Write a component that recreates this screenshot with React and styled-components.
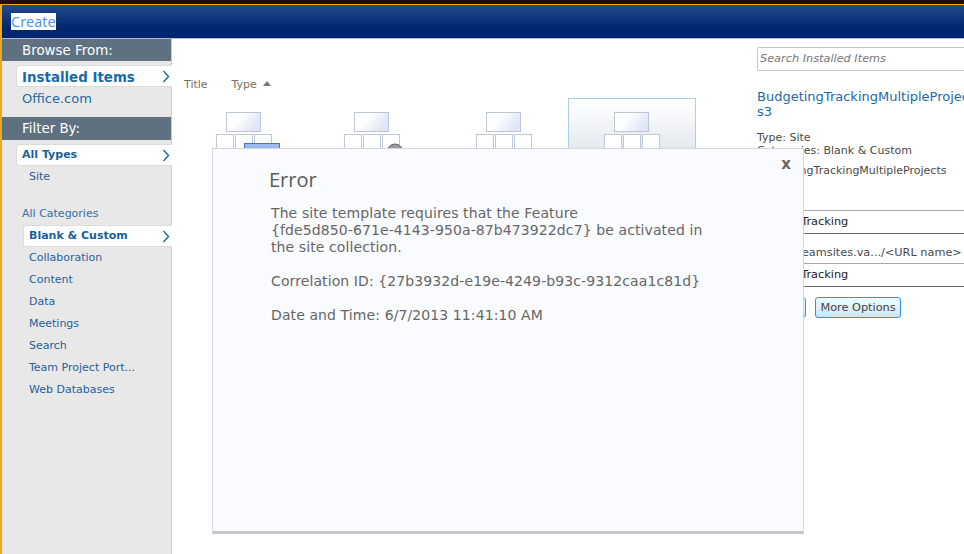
import React from "react";
import styled, { createGlobalStyle } from "styled-components";

const Global = createGlobalStyle`
  html, body { margin: 0; height: 100%; overflow: hidden; background: #fff; }
  body { font-family: "DejaVu Sans", Verdana, sans-serif; }
  * { box-sizing: border-box; }
`;

const Page = styled.div`
  position: relative;
  width: 964px;
  height: 554px;
  overflow: hidden;
  display: flex;
  flex-direction: column;
  background: #fff;
`;
const TopStrip = styled.div`
  height: 5px;
  flex: none;
  background: #1a1208;
  border-bottom: 1px solid #f0a81c;
`;
const Header = styled.header`
  height: 34px;
  flex: none;
  display: flex;
  align-items: flex-start;
  padding: 8px 0 0 9px;
  background: linear-gradient(#234a8c, #00266f 70%);
  border-left: 2px solid #f0a81c;
  border-bottom: 1px solid #b4b8c0;
`;
const Create = styled.span`
  font-family: "Open Sans", sans-serif;
  font-size: 14.5px;
  line-height: 17px;
  background: #fff;
  color: #4a90f0;
`;
const Body = styled.div`
  flex: 1;
  display: flex;
  min-height: 0;
`;
const Side = styled.nav`
  width: 172px;
  flex: none;
  background: #e8e8e8;
  border-left: 2px solid #f0a81c;
  border-right: 1px solid #ccc;
`;
const SideHead = styled.div`
  height: ${(p) => p.$h || 22}px;
  padding-left: 20px;
  background: #5f7080;
  color: #fff;
  font-size: 13.4px;
  line-height: 23px;
`;
const BigList = styled.div`
  padding: 4px 0 8px 14px;
`;
const BigItem = styled.div`
  position: relative;
  height: 22px;
  padding-left: 6px;
  color: #1a6aa8;
  font-size: 13px;
  line-height: 23px;
  ${(p) => p.$active && "font-size:13.4px;font-weight:700;background:#fff;border:1px solid #dcdcdc;border-right:0;border-radius:3px 0 0 3px;line-height:23px;padding-left:5px;margin-right:-1px;"}
`;
const SmallList = styled.div`
  padding: 4px 0 0 14px;
`;
const SmallItem = styled.div`
  position: relative;
  height: 22px;
  margin-left: ${(p) => (p.$flat ? 6 : 13)}px;
  margin-top: ${(p) => p.$gap || 0}px;
  color: ${(p) => (p.$flat ? "#3a6ea8" : "#26609c")};
  font-size: 11px;
  line-height: 22px;
`;
const ActiveItem = styled.div`
  position: relative;
  height: 22px;
  margin-left: ${(p) => p.$left}px;
  margin-right: -1px;
  padding-left: 5px;
  background: #fff;
  border: 1px solid #dcdcdc;
  border-right: 0;
  border-radius: 3px 0 0 3px;
  color: #1a5f9c;
  font-size: 11px;
  font-weight: 700;
  line-height: 20px;
`;
const Arrow = styled.svg`
  position: absolute;
  right: 2px;
  top: 4px;
`;
const Main = styled.main`
  flex: 1;
  min-width: 0;
  padding: 0 0 0 12px;
  display: flex;
`;
const Gallery = styled.section`
  width: 573px;
  flex: none;
`;
const Sort = styled.div`
  display: flex;
  align-items: center;
  gap: 24px;
  height: 20px;
  margin-top: 35px;
  color: #7a6f66;
  font-size: 11px;
`;
const Caret = styled.i`
  display: inline-block;
  margin-left: 6px;
  border: 4px solid transparent;
  border-top: 0;
  border-bottom: 5px solid #777;
  vertical-align: 2px;
`;
const Tiles = styled.div`
  display: flex;
  margin: 4px 0 0 -4px;
`;
const Tile = styled.div`
  width: 128px;
  height: 120px;
  margin-left: ${(p) => p.$gap || 0}px;
  padding-top: 13px;
  display: flex;
  justify-content: center;
  border: 1px solid ${(p) => (p.$hover ? "#a8d0ea" : "transparent")};
  background: ${(p) => (p.$hover ? "linear-gradient(#fff, #e4e9ef 50px)" : "none")};
`;
const Detail = styled.aside`
  width: 207px;
  flex: none;
  padding-top: 8px;
  white-space: nowrap;
  font-size: 11.3px;
  color: #4a4a4a;
`;
const Search = styled.div`
  width: 210px;
  height: 24px;
  border: 1px solid #c8c8c8;
  border-radius: 2px 0 0 2px;
  padding-left: 2px;
  font-style: italic;
  color: #777;
  line-height: 21px;
`;
const ItemTitle = styled.div`
  width: 218px;
  margin-top: 18px;
  color: #1a6aa8;
  font-size: 13px;
  line-height: 15px;
  word-break: break-all;
  white-space: normal;
`;
const Meta = styled.div`
  font-size: 11px;
  line-height: 13px;
  margin-top: ${(p) => p.$top || 0}px;
`;
const Field = styled.div`
  width: 215px;
  height: 24px;
  margin-top: ${(p) => p.$top || 0}px;
  border-top: 1px solid #a0a8b4;
  border-bottom: 1px solid #5f6c7c;
  color: #222;
  line-height: 22px;
`;
const Url = styled.div`
  height: 29px;
  padding-top: 12px;
  line-height: 14px;
  white-space: nowrap;
`;
const Buttons = styled.div`
  display: flex;
  gap: 9px;
  margin-top: 10px;
`;
const Btn = styled.div`
  width: ${(p) => p.$w}px;
  height: 21px;
  border: 1px solid #2a96e8;
  border-radius: 3px;
  background: linear-gradient(#f6fafd, #cfe4f4);
  color: #444;
  font-size: 11.3px;
  line-height: 19px;
  text-align: center;
`;
const Modal = styled.div`
  position: absolute;
  left: 212px;
  top: 148px;
  width: 592px;
  height: 386px;
  padding: 18px 0 0 56px;
  background: #fafbfe;
  border: 1px solid #d2d5dd;
  border-bottom: 3px solid #c4c6cc;
  color: #666;
`;
const Close = styled.span`
  position: absolute;
  right: 12px;
  top: 6px;
  font-size: 15px;
  font-weight: 700;
  color: #6a6660;
`;
const ModalTitle = styled.h2`
  margin: 0;
  font-family: "Open Sans", sans-serif;
  font-weight: 400;
  font-size: 20px;
  line-height: 26px;
  color: #5c5c5c;
`;
const ModalText = styled.p`
  margin: 17px 0 0 2px;
  width: 440px;
  font-size: 14px;
  line-height: 17px;
  letter-spacing: 0.1px;
  color: #666;
  &:first-of-type { margin-top: 12px; }
`;
const Guid = styled.span`
  white-space: nowrap;
`;

const Chevron = () => (
  <Arrow width="8" height="13" viewBox="0 0 8 13">
    <path d="M1.5 1 L6.5 6.5 L1.5 12" fill="none" stroke="#1a6aa8" strokeWidth="1.4" />
  </Arrow>
);

// little org-chart thumbnail used by every template tile
const TileIcon = ({ badge }) => (
  <svg width="90" height="90" viewBox="0 0 90 90" style={{ flex: "none" }}>
    <defs>
      <linearGradient id="ti" x1="0" y1="0" x2="1" y2="0.4">
        <stop offset="0.4" stopColor="#fff" />
        <stop offset="1" stopColor="#dfe6f5" />
      </linearGradient>
    </defs>
    <rect x="27.5" y="0.5" width="34" height="19" fill="url(#ti)" stroke="#bcc6d6" />
    <rect x="17.5" y="22.5" width="17" height="17" fill="#fff" stroke="#c0c8d8" />
    <rect x="36.5" y="22.5" width="17" height="17" fill="#fff" stroke="#c0c8d8" />
    <rect x="55.5" y="22.5" width="17" height="17" fill="#fff" stroke="#c0c8d8" />
    {badge === "blue" && <rect x="45.5" y="31.5" width="35" height="12" fill="#9db8f0" stroke="#4a70d0" />}
    {badge === "round" && <circle cx="68" cy="40" r="8" fill="#9a9a9a" stroke="#666" />}
  </svg>
);

const categories = ["Collaboration", "Content", "Data", "Meetings", "Search", "Team Project Port...", "Web Databases"];

export default function App() {
  return (
    <Page>
      <Global />
      <TopStrip />
      <Header>
        <Create>Create</Create>
      </Header>
      <Body>
        <Side>
          <SideHead>Browse From:</SideHead>
          <BigList>
            <BigItem $active>Installed Items<Chevron /></BigItem>
            <BigItem>Office.com</BigItem>
          </BigList>
          <SideHead $h={23}>Filter By:</SideHead>
          <SmallList>
            <ActiveItem $left={0}>All Types<Chevron /></ActiveItem>
            <SmallItem>Site</SmallItem>
            <SmallItem $flat $gap={15}>All Categories</SmallItem>
            <ActiveItem $left={7}>Blank &amp; Custom<Chevron /></ActiveItem>
            {categories.map((c) => (
              <SmallItem key={c}>{c}</SmallItem>
            ))}
          </SmallList>
        </Side>
        <Main>
          <Gallery>
            <Sort>
              <span>Title</span>
              <span>Type<Caret /></span>
            </Sort>
            <Tiles>
              <Tile><TileIcon badge="blue" /></Tile>
              <Tile><TileIcon badge="round" /></Tile>
              <Tile $gap={4}><TileIcon /></Tile>
              <Tile $hover><TileIcon /></Tile>
            </Tiles>
          </Gallery>
          <Detail>
            <Search>Search Installed Items</Search>
            <ItemTitle>BudgetingTrackingMultipleProjects3</ItemTitle>
            <Meta $top={12}>Type: Site</Meta>
            <Meta>Categories: Blank &amp; Custom</Meta>
            <Meta $top={7}>BudgetingTrackingMultipleProjects</Meta>
            <Field $top={33}>Budget Tracking</Field>
            <Url>https://teamsites.va.../&lt;URL name&gt;</Url>
            <Field>Budget Tracking</Field>
            <Buttons>
              <Btn $w={49}>Create</Btn>
              <Btn $w={86}>More Options</Btn>
            </Buttons>
          </Detail>
        </Main>
      </Body>
      <Modal>
        <Close>x</Close>
        <ModalTitle>Error</ModalTitle>
        <ModalText>
          The site template requires that the Feature <Guid>{"{fde5d850-671e-4143-950a-87b473922dc7}"}</Guid> be activated in the site collection.
        </ModalText>
        <ModalText>Correlation ID: <Guid>{"{27b3932d-e19e-4249-b93c-9312caa1c81d}"}</Guid></ModalText>
        <ModalText>Date and Time: 6/7/2013 11:41:10 AM</ModalText>
      </Modal>
    </Page>
  );
}
